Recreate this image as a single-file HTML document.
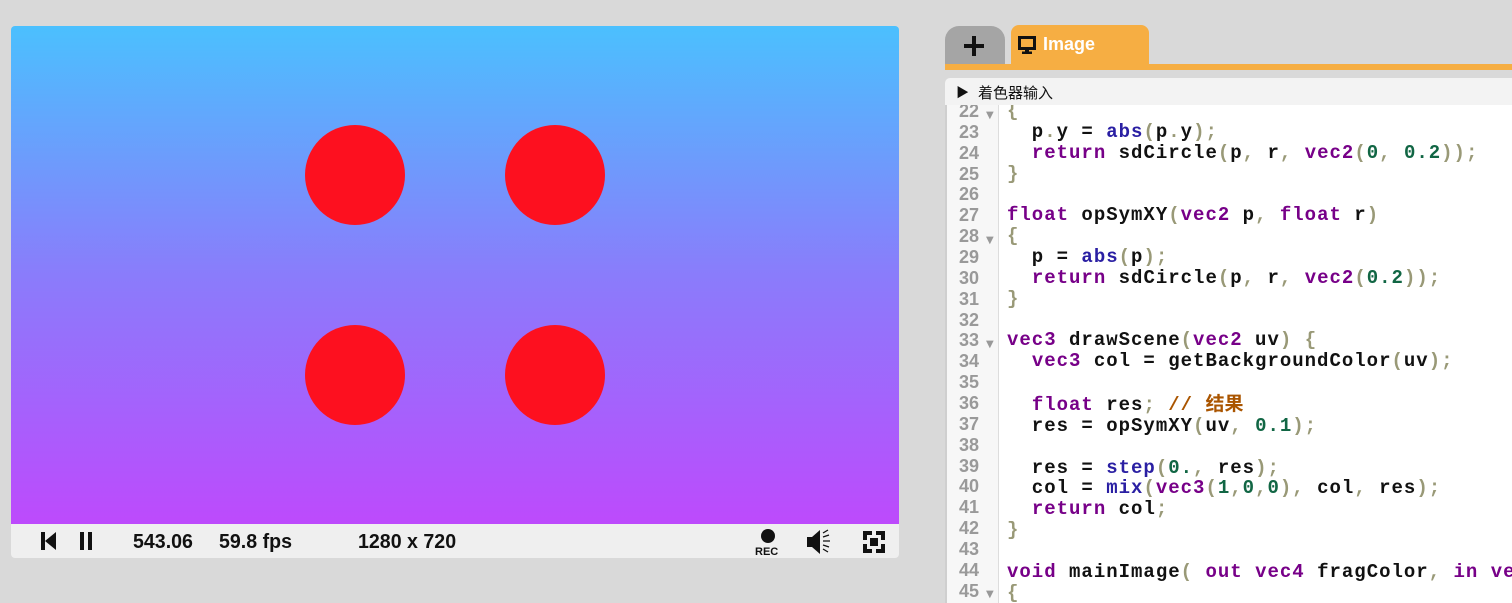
<!DOCTYPE html>
<html><head><meta charset="utf-8"><style>
*{margin:0;padding:0;box-sizing:border-box}
body{width:1512px;height:603px;overflow:hidden;background:#d9d9d9;position:relative;font-family:"Liberation Sans","Noto Sans CJK SC",sans-serif}
.cv{position:absolute;left:11px;top:26px;width:888px;height:498px;background:linear-gradient(#4bc0fe,#8a7cfb 50%,#bd4afc);border-radius:4px 4px 0 0}
.c{position:absolute;width:100px;height:100px;border-radius:50%;background:#fd101f}
.bar{position:absolute;left:11px;top:524px;width:888px;height:34px;background:#efefef;border-radius:0 0 4px 4px;font-family:"Liberation Sans",sans-serif;font-weight:bold;font-size:20px;color:#111}
.bar span{position:absolute;top:7px;transform:scaleX(.98);transform-origin:left}
.tab1{position:absolute;left:945px;top:26px;width:60px;height:40px;background:#a5a5a5;border-radius:14px 14px 0 0}
.tab2{position:absolute;left:1011px;top:25px;width:138px;height:41px;background:#f6ae43;border-radius:8px 8px 0 0;color:#fff;font-weight:bold;font-size:18px}
.ob{position:absolute;left:945px;top:64px;width:567px;height:6px;background:#f6ae43}
.hd{position:absolute;left:945px;top:78px;width:567px;height:27px;background:#f3f3f3;border-radius:5px 0 0 0;font-size:15px;color:#111}
.ed{position:absolute;left:945px;top:105px;width:567px;height:498px;background:#fff;overflow:hidden;border-left:2px solid #cfcfcf}
.gut{position:absolute;left:0;top:0;width:52px;height:498px;background:#f7f7f7;border-right:1px solid #ddd}
.code{position:absolute;top:-4px;left:0;font-family:"Liberation Mono",monospace;font-weight:bold;font-size:19px;letter-spacing:1px;line-height:20.86px;white-space:pre;color:#111}
.ln{position:absolute;left:0;width:32px;text-align:right;color:#999;font-family:"Liberation Sans",sans-serif;font-weight:bold;font-size:18px;letter-spacing:0}
.k{color:#770088}.b{color:#2a1fa3}.n{color:#116644}.p{color:#999977}.cm{color:#aa5500}
.ar{position:absolute;left:39px;color:#999;font-size:10px;font-family:"DejaVu Sans",sans-serif}
</style></head><body>
<div class="cv">
<div class="c" style="left:294px;top:99px"></div><div class="c" style="left:494px;top:99px"></div>
<div class="c" style="left:294px;top:299px"></div><div class="c" style="left:494px;top:299px"></div>
</div>
<div class="bar">
<svg style="position:absolute;left:30px;top:8px" width="20" height="18"><rect x="0" y="0" width="4" height="18" fill="#111"/><path d="M4 9 L15 0 V18Z" fill="#111"/></svg>
<svg style="position:absolute;left:69px;top:8px" width="14" height="18"><rect x="0" y="0" width="4" height="18" fill="#111"/><rect x="8" y="0" width="4" height="18" fill="#111"/></svg>
<span style="left:122px">543.06</span><span style="left:208px">59.8 fps</span><span style="left:347px">1280 x 720</span>
<svg style="position:absolute;left:741px;top:4px" width="32" height="28"><circle cx="16" cy="8" r="7" fill="#111"/><text x="3" y="27" font-size="11" font-weight="bold" font-family="Liberation Sans" fill="#111">REC</text></svg>
<svg style="position:absolute;left:794px;top:5px" width="28" height="26"><path d="M2 8h5l8-7v24l-8-7H2z" fill="#111"/><path d="M18 4l5-3M18 8l6-2M18 12h7M18 16l6 2M18 20l5 3" stroke="#111" stroke-width="1.3"/></svg>
<svg style="position:absolute;left:852px;top:7px" width="22" height="22"><path d="M0 0h9v4h-5v5H0zM13 0h9v9h-4V4h-5zM0 13h4v5h5v4H0zM18 13h4v9h-9v-4h5z" fill="#111"/><rect x="7" y="7" width="8" height="8" fill="#111"/></svg>
</div>
<div class="tab1"><svg style="position:absolute;left:19px;top:10px" width="20" height="20"><path d="M8 0h4v8h8v4h-8v8H8v-8H0V8h8z" fill="#111"/></svg></div>
<div class="tab2"><svg style="position:absolute;left:7px;top:11px" width="18" height="18"><rect x="1.5" y="1.5" width="15" height="11" fill="none" stroke="#111" stroke-width="3"/><rect x="7" y="13" width="4" height="3" fill="#111"/><rect x="4" y="15.5" width="10" height="2.5" fill="#111"/></svg><span style="position:absolute;left:32px;top:9px">Image</span></div>
<div class="ob"></div>
<div class="hd"><span style="position:absolute;left:11px;top:4px;font-size:13px">▶</span><span style="position:absolute;left:33px;top:4px">着色器输入</span></div>
<div class="ed"><div class="gut"></div>
<div class="code" style="left:0;width:565px">
<div class="ln" style="top:0">22<br>23<br>24<br>25<br>26<br>27<br>28<br>29<br>30<br>31<br>32<br>33<br>34<br>35<br>36<br>37<br>38<br>39<br>40<br>41<br>42<br>43<br>44<br>45</div>
<div class="ar" style="top:5px">▼</div><div class="ar" style="top:130px">▼</div><div class="ar" style="top:234px">▼</div><div class="ar" style="top:484px">▼</div>
<div style="position:absolute;left:60px;top:0"><span class="p">{</span>
  p<span class="p">.</span>y = <span class="b">abs</span><span class="p">(</span>p<span class="p">.</span>y<span class="p">);</span>
  <span class="k">return</span> sdCircle<span class="p">(</span>p<span class="p">,</span> r<span class="p">,</span> <span class="k">vec2</span><span class="p">(</span><span class="n">0</span><span class="p">,</span> <span class="n">0.2</span><span class="p">));</span>
<span class="p">}</span>

<span class="k">float</span> opSymXY<span class="p">(</span><span class="k">vec2</span> p<span class="p">,</span> <span class="k">float</span> r<span class="p">)</span>
<span class="p">{</span>
  p = <span class="b">abs</span><span class="p">(</span>p<span class="p">);</span>
  <span class="k">return</span> sdCircle<span class="p">(</span>p<span class="p">,</span> r<span class="p">,</span> <span class="k">vec2</span><span class="p">(</span><span class="n">0.2</span><span class="p">));</span>
<span class="p">}</span>

<span class="k">vec3</span> drawScene<span class="p">(</span><span class="k">vec2</span> uv<span class="p">)</span> <span class="p">{</span>
  <span class="k">vec3</span> col = getBackgroundColor<span class="p">(</span>uv<span class="p">);</span>

  <span class="k">float</span> res<span class="p">;</span> <span class="cm">// <span style="font-family:'Noto Sans CJK SC',sans-serif;letter-spacing:0">结果</span></span>
  res = opSymXY<span class="p">(</span>uv<span class="p">,</span> <span class="n">0.1</span><span class="p">);</span>

  res = <span class="b">step</span><span class="p">(</span><span class="n">0.</span><span class="p">,</span> res<span class="p">);</span>
  col = <span class="b">mix</span><span class="p">(</span><span class="k">vec3</span><span class="p">(</span><span class="n">1</span><span class="p">,</span><span class="n">0</span><span class="p">,</span><span class="n">0</span><span class="p">),</span> col<span class="p">,</span> res<span class="p">);</span>
  <span class="k">return</span> col<span class="p">;</span>
<span class="p">}</span>

<span class="k">void</span> mainImage<span class="p">(</span> <span class="k">out</span> <span class="k">vec4</span> fragColor<span class="p">,</span> <span class="k">in</span> <span class="k">vec2</span>
<span class="p">{</span></div>
</div></div>
</body></html>
